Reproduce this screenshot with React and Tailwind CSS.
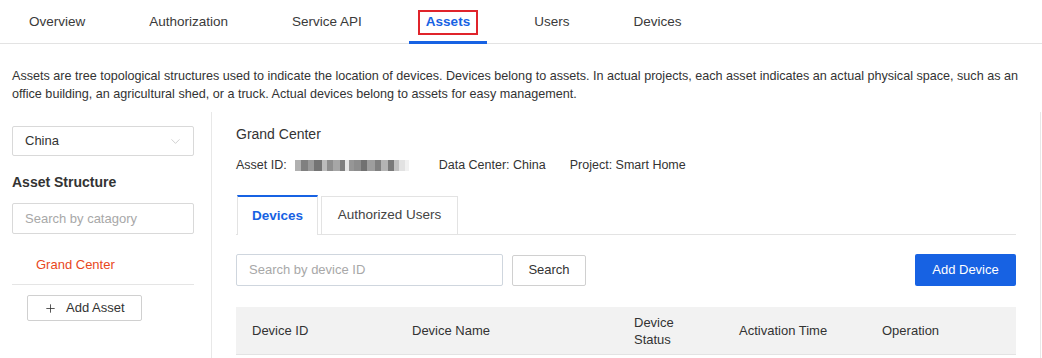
import React from 'react';
import { ChevronDown, Plus } from 'lucide-react';

const navItems = ['Overview', 'Authorization', 'Service API', 'Assets', 'Users', 'Devices'];

// blurred asset id, drawn as a strip of grey blocks
const BlurredId = () => (
  <div className="flex items-center h-[11px] ml-[8px]">
    <div className="w-[6px] h-full bg-[#b0b0b0]" />
    <div className="w-[7px] h-full bg-[#808080]" />
    <div className="w-[6px] h-full bg-[#9a9a9a]" />
    <div className="w-[8px] h-full bg-[#747474]" />
    <div className="w-[5px] h-full bg-[#bcbcbc]" />
    <div className="w-[6px] h-full bg-[#8e8e8e]" />
    <div className="w-[7px] h-full bg-[#a6a6a6]" />
    <div className="w-[5px] h-full bg-[#7e7e7e]" />
    <div className="w-[4px] h-full bg-[#e6e6e6]" />
    <div className="w-[5px] h-full bg-[#969696]" />
    <div className="w-[7px] h-full bg-[#8d8d8d]" />
    <div className="w-[6px] h-full bg-[#717171]" />
    <div className="w-[8px] h-full bg-[#9e9e9e]" />
    <div className="w-[6px] h-full bg-[#808080]" />
    <div className="w-[7px] h-full bg-[#b4b4b4]" />
    <div className="w-[6px] h-full bg-[#7a7a7a]" />
    <div className="w-[5px] h-full bg-[#c2c2c2]" />
    <div className="w-[6px] h-full bg-[#e2e2e2]" />
    <div className="w-[4px] h-full bg-[#f1f1f1]" />
  </div>
);

const App = () => {
  return (
    <div className="w-[1042px] h-[358px] overflow-hidden bg-white text-[#333] font-['Liberation_Sans',Arial,sans-serif]">
      {/* top navigation */}
      <div className="flex h-[44px] pl-3 gap-[30px] border-b border-[#e3e3e3]">
        {navItems.map((item) => (
          <div
            key={item}
            className={`flex items-center px-[17px] text-[13.5px] -mb-px ${
              item === 'Assets' ? 'border-b-[3px] border-[#1762e3]' : 'border-b-[3px] border-transparent'
            }`}
          >
            {item === 'Assets' ? (
              <span className="border-2 border-[#e0242b] px-[6px] h-[25px] flex items-center -mx-[8px] mt-[4px] font-bold text-[#1762e3]">
                Assets
              </span>
            ) : (
              <span className="mt-[4px] text-[#3a3a3a]">{item}</span>
            )}
          </div>
        ))}
      </div>

      {/* description */}
      <p className="mt-[23px] px-3 text-[12.6px] leading-[18px] text-[#333]">
        Assets are tree topological structures used to indicate the location of devices. Devices belong to assets. In actual projects, each asset indicates an actual physical space, such as an office building, an agricultural shed, or a truck. Actual devices belong to assets for easy management.
      </p>

      <div className="flex mt-[9px] h-[300px]">
        {/* left panel */}
        <div className="w-[211px] pl-3 pr-[17px] pt-[14px] shrink-0">
          <div className="h-[30px] border border-[#d9d9d9] rounded-[2px] flex items-center justify-between pl-3 pr-[10px] text-[13px] text-[#333]">
            <span>China</span>
            <ChevronDown className="w-[15px] h-[15px] text-[#b5b5b5]" strokeWidth={1} />
          </div>
          <div className="mt-4 text-[14px] leading-5 font-bold text-[#333]">Asset Structure</div>
          <div className="mt-[11px] h-[31px] border border-[#d9d9d9] rounded-[2px] flex items-center pl-3 text-[13px] text-[#a8a8a8]">
            Search by catagory
          </div>
          <div className="pt-[21px] pb-[9px] pl-6 leading-5 text-[13px] text-[#e8471c] border-b border-[#e5e5e5]">
            Grand Center
          </div>
          <button className="mt-[10px] ml-[15px] w-[115px] h-[26px] border border-[#d0d0d0] rounded-[2px] flex items-center pl-[16px] gap-[9px] text-[13px] text-[#333]">
            <Plus className="w-[13px] h-[13px]" strokeWidth={1.5} />
            Add Asset
          </button>
        </div>

        {/* right panel */}
        <div className="w-[830px] border-x border-[#e8e8e8] px-6 pt-3">
          <div className="text-[14px] leading-5 text-[#333]">Grand Center</div>
          <div className="mt-3 flex items-center text-[12.5px] leading-[18px] text-[#333]">
            <span>Asset ID:</span>
            <BlurredId />
            <span className="ml-[30px]">Data Center: China</span>
            <span className="ml-[24px]">Project: Smart Home</span>
          </div>

          {/* tabs */}
          <div className="mt-[21px] flex items-end gap-[3px] border-b border-[#e3e3e3]">
            <div className="h-[40px] -mb-px ml-px w-[81px] bg-white border-t-2 border-t-[#1762e3] border-x border-x-[#e3e3e3] flex items-center justify-center text-[13.5px] font-bold text-[#1762e3]">
              Devices
            </div>
            <div className="h-[38px] w-[137px] border border-b-0 border-[#e3e3e3] flex items-center justify-center text-[13.5px] text-[#444]">
              Authorized Users
            </div>
          </div>

          {/* search row */}
          <div className="mt-[19px] flex items-center">
            <div className="w-[267px] h-[32px] border border-[#cfd6de] rounded-[2px] flex items-center pl-3 text-[13px] text-[#a8a8a8]">
              Search by device ID
            </div>
            <button className="ml-[9px] w-[74px] h-[31px] border border-[#d0d0d0] rounded-[2px] text-[13px] text-[#333]">
              Search
            </button>
            <button className="ml-auto w-[101px] h-[32px] bg-[#1762e3] rounded-[2px] text-[13px] text-white">
              Add Device
            </button>
          </div>

          {/* table header */}
          <div className="mt-[21px] h-[48px] bg-[#f2f2f2] border-b border-[#e3e3e3] grid grid-cols-[160px_222px_105px_143px_1fr] items-center text-[13px] leading-[17px] font-medium text-[#333]">
            <div className="pl-4">Device ID</div>
            <div className="pl-4">Device Name</div>
            <div className="pl-4 w-[72px] box-content">Device Status</div>
            <div className="pl-4">Activation Time</div>
            <div className="pl-4">Operation</div>
          </div>
        </div>
      </div>
    </div>
  );
};

export default App;
